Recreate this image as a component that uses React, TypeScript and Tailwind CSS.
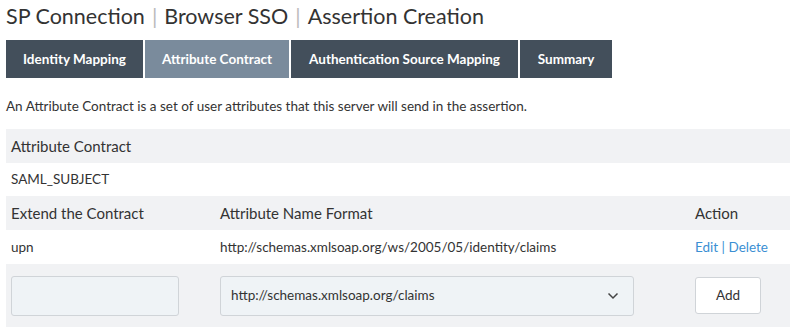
import React from "react";

const tabs = [
  { label: "Identity Mapping", w: "w-[137px]", active: false },
  { label: "Attribute Contract", w: "w-[144px]", active: true },
  { label: "Authentication Source Mapping", w: "w-[227px]", active: false },
  { label: "Summary", w: "w-[92px]", active: false },
];

export default function App() {
  return (
    <div className="w-[800px] h-[336px] bg-white text-[#333] font-['Lato',sans-serif] overflow-hidden">
      <div className="pl-[6px] pt-[2px] h-[40px] text-[21.5px] leading-[28px] text-[#333] flex items-start">
        <span>SP Connection</span>
        <span className="mx-[7px] text-[#bbb]">|</span>
        <span>Browser SSO</span>
        <span className="mx-[7px] text-[#bbb]">|</span>
        <span>Assertion Creation</span>
      </div>
      <div className="flex pl-[6px] gap-[2px] h-[38px]">
        {tabs.map((t) => (
          <div
            key={t.label}
            className={`${t.w} h-full flex items-center justify-center text-white text-[13.5px] font-bold ${
              t.active ? "bg-[#7a8b9c]" : "bg-[#434f5b]"
            }`}
          >
            {t.label}
          </div>
        ))}
      </div>
      <div className="pl-[6px] pt-[20px] h-[51px] text-[13.5px] leading-[17px]">
        An Attribute Contract is a set of user attributes that this server will send in the assertion.
      </div>
      <div className="ml-[6px] w-[784px] text-[15px]">
        <div className="h-[34px] bg-[#f1f2f4] flex items-center pl-[5px]">Attribute Contract</div>
        <div className="h-[33px] flex items-center pl-[5px] text-[13.5px]">SAML_SUBJECT</div>
        <div className="h-[34px] bg-[#f1f2f4] flex items-center">
          <div className="w-[214px] pl-[5px]">Extend the Contract</div>
          <div className="w-[475px]">Attribute Name Format</div>
          <div>Action</div>
        </div>
        <div className="h-[34px] flex items-center text-[13.5px]">
          <div className="w-[214px] pl-[5px]">upn</div>
          <div className="w-[475px]">http://schemas.xmlsoap.org/ws/2005/05/identity/claims</div>
          <div className="text-[#3b8fd3]">
            Edit <span className="text-[#3b8fd3]">|</span> Delete
          </div>
        </div>
        <div className="h-[63px] bg-[#f1f2f4] flex items-center">
          <div className="w-[214px] pl-[5px]">
            <div className="w-[168px] h-[40px] bg-[#eff3f6] border border-[#d0d4d8] rounded-[3px]" />
          </div>
          <div className="w-[475px]">
            <div className="w-[414px] h-[40px] bg-[#eff3f6] border border-[#d0d4d8] rounded-[3px] flex items-center justify-between pl-[10px] pr-[14px] text-[13.5px]">
              <span>http://schemas.xmlsoap.org/claims</span>
              <svg width="12" height="8" viewBox="0 0 12 8" fill="none" stroke="#444" strokeWidth="1.5">
                <path d="M1.5 1.5 L6 6 L10.5 1.5" />
              </svg>
            </div>
          </div>
          <div>
            <div className="w-[66px] h-[37px] bg-white border border-[#d0d4d8] rounded-[3px] flex items-center justify-center text-[13.5px]">
              Add
            </div>
          </div>
        </div>
      </div>
    </div>
  );
}
